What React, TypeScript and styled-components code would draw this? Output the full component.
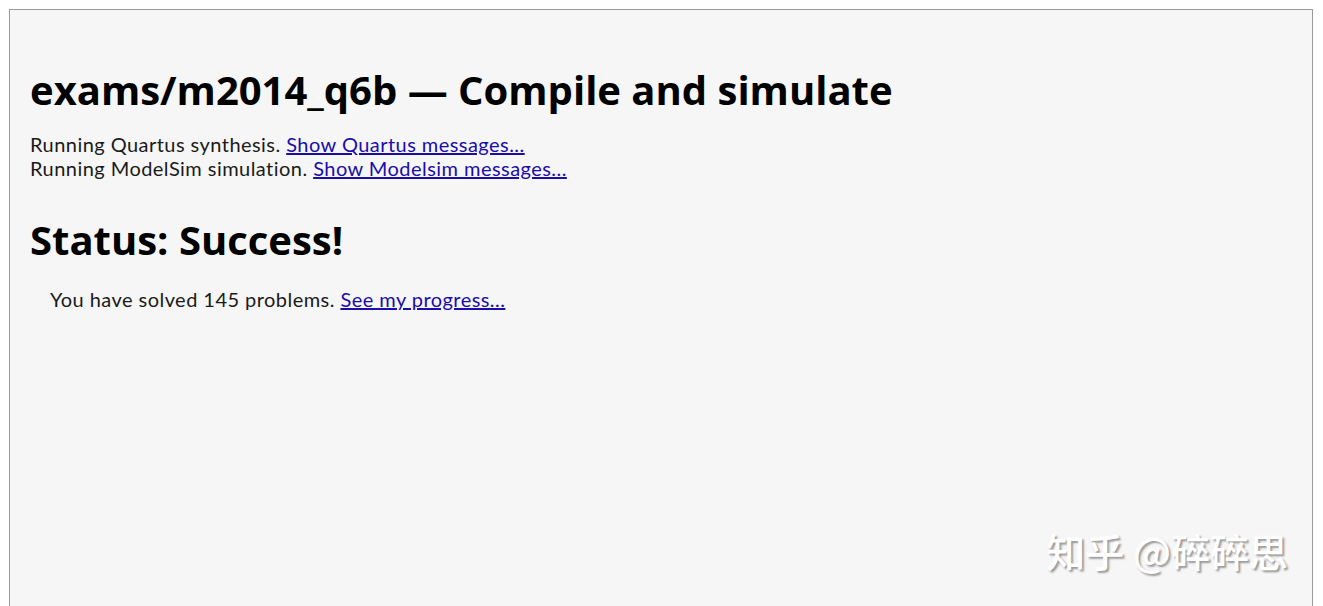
import React from "react";
import styled, { createGlobalStyle } from "styled-components";

const Global = createGlobalStyle`
  html, body { margin: 0; padding: 0; background: #ffffff; }
  body { padding: 9px 10px 0 9px; overflow: hidden; }
`;

const Frame = styled.div`
  position: relative;
  box-sizing: border-box;
  height: 620px;
  border: 1px solid #9a9a9a;
  border-bottom: none;
  background: #f6f6f6;
  padding: 1px 20px 0 20px;
  font-family: Lato, "Open Sans", sans-serif;
  color: #1a1a1a;
`;

const Title = styled.h1`
  font-family: "Open Sans", sans-serif;
  font-weight: 700;
  font-size: 40px;
  line-height: 52px;
  color: #000;
  margin: 53px 0 16px 0;
`;

const Log = styled.div`
  font-size: 20px;
  line-height: 24px;
  letter-spacing: 0.45px;
  font-weight: 400;
`;

const Link = styled.a`
  color: #1a0dab;
  text-decoration: underline;
  cursor: pointer;
`;

const Status = styled.h2`
  font-family: "Open Sans", sans-serif;
  font-weight: 700;
  font-size: 40px;
  line-height: 52px;
  color: #000;
  margin: 34px 0 21px 0;
`;

const Solved = styled.p`
  font-size: 20px;
  line-height: 24px;
  letter-spacing: 0.45px;
  margin: 0 0 0 20px;
`;

const Watermark = styled.div`
  position: absolute;
  right: 24px;
  top: 512px;
  font-family: "Noto Sans CJK SC", sans-serif;
  font-size: 39px;
  font-weight: 500;
  color: #ffffff;
  text-shadow: 2px 2px 2px #9a9a9a;
`;

export default function App() {
  return (
    <>
      <Global />
      <Frame>
        <Title>exams/m2014_q6b — Compile and simulate</Title>
        <Log>
          Running Quartus synthesis. <Link>Show Quartus messages...</Link>
          <br />
          Running ModelSim simulation. <Link>Show Modelsim messages...</Link>
        </Log>
        <Status>Status: Success!</Status>
        <Solved>
          You have solved 145 problems. <Link>See my progress...</Link>
        </Solved>
        <Watermark>知乎 @碎碎思</Watermark>
      </Frame>
    </>
  );
}
